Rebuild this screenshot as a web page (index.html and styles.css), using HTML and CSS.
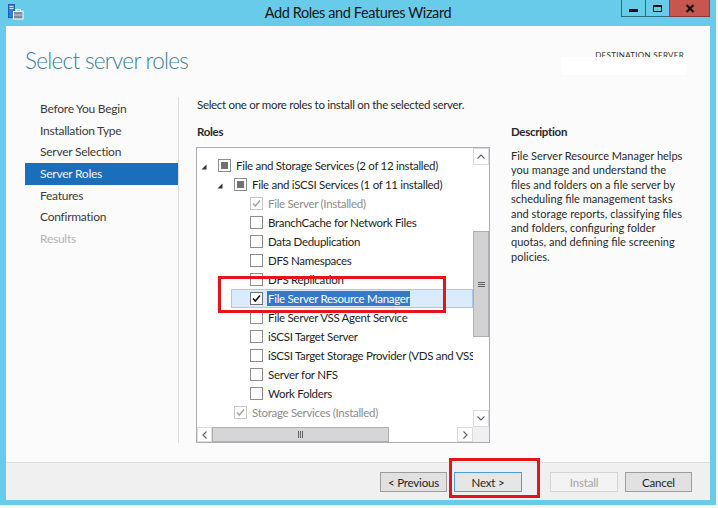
FILE: index.html
```html
<!DOCTYPE html>
<html lang="en">
<head>
    <meta charset="UTF-8">
    <title>Add Roles and Features Wizard</title>
    <link rel="stylesheet" href="styles.css">
</head>
<body>
    <div class="window">
        <!-- Title bar -->
        <div class="titlebar">
            <div class="tb-left">
                <svg class="app-icon" width="16" height="16" viewBox="0 0 16 16">
                    <rect x="0.5" y="0.5" width="6" height="13" fill="#2f7fd6" stroke="#1d5fae"/>
                    <rect x="1.5" y="2" width="4" height="1" fill="#cfe6ff"/>
                    <rect x="1.5" y="4" width="4" height="1" fill="#cfe6ff"/>
                    <rect x="5" y="7" width="10.5" height="8.5" fill="#fff"/>
                    <rect x="8" y="5.5" width="4.5" height="3" fill="none" stroke="#fff" stroke-width="1.2"/>
                    <rect x="6" y="8" width="8.5" height="6.5" fill="#7d8c9b"/>
                    <rect x="6" y="10.5" width="8.5" height="1" fill="#c3ccd5"/>
                </svg>
            </div>
            <div class="title">Add Roles and Features Wizard</div>
            <div class="caption-buttons">
                <div class="cap-btn cap-min"><span class="glyph-min"></span></div>
                <div class="cap-btn cap-max"><span class="glyph-max"></span></div>
                <div class="cap-btn cap-close">
                    <svg width="10" height="9" viewBox="0 0 10 9">
                        <path d="M1.5 1 L8.5 8 M8.5 1 L1.5 8" stroke="#111" stroke-width="2.2"/>
                    </svg>
                </div>
            </div>
        </div>

        <div class="client">
            <div class="header">
                <h1>Select server roles</h1>
                <div class="dest">
                    <div class="dest-label">DESTINATION SERVER</div>
                    <div class="dest-name"></div>
                </div>
            </div>

            <div class="main">
                <ul class="steps">
                    <li>Before You Begin</li>
                    <li>Installation Type</li>
                    <li>Server Selection</li>
                    <li class="current">Server Roles</li>
                    <li>Features</li>
                    <li>Confirmation</li>
                    <li class="disabled">Results</li>
                </ul>

                <div class="content">
                    <p class="intro">Select one or more roles to install on the selected server.</p>
                    <div class="columns">
                        <div class="roles">
                            <h2>Roles</h2>
                            <div class="listbox">
                                <div class="list-view">
                                    <div class="rows">
                                        <div class="row lvl0">
                                            <div class="item">
                                                <span class="exp"><svg width="6" height="6" viewBox="0 0 6 6"><path d="M5.5 0.5 V5.5 H0.5 Z" fill="#333"/></svg></span>
                                                <span class="cb partial"></span>
                                                <span class="label">File and Storage Services (2 of 12 installed)</span>
                                            </div>
                                        </div>
                                        <div class="row lvl1">
                                            <div class="item">
                                                <span class="exp"><svg width="6" height="6" viewBox="0 0 6 6"><path d="M5.5 0.5 V5.5 H0.5 Z" fill="#333"/></svg></span>
                                                <span class="cb partial"></span>
                                                <span class="label">File and iSCSI Services (1 of 11 installed)</span>
                                            </div>
                                        </div>
                                        <div class="row lvl2">
                                            <div class="item">
                                                <span class="exp"></span>
                                                <span class="cb checked disabled"><svg width="11" height="11" viewBox="0 0 11 11"><path d="M2 5.5 L4.3 8 L9 2.5" fill="none" stroke="#a6a6a6" stroke-width="1.5"/></svg></span>
                                                <span class="label muted">File Server (Installed)</span>
                                            </div>
                                        </div>
                                        <div class="row lvl2">
                                            <div class="item">
                                                <span class="exp"></span>
                                                <span class="cb"></span>
                                                <span class="label">BranchCache for Network Files</span>
                                            </div>
                                        </div>
                                        <div class="row lvl2">
                                            <div class="item">
                                                <span class="exp"></span>
                                                <span class="cb"></span>
                                                <span class="label">Data Deduplication</span>
                                            </div>
                                        </div>
                                        <div class="row lvl2">
                                            <div class="item">
                                                <span class="exp"></span>
                                                <span class="cb"></span>
                                                <span class="label">DFS Namespaces</span>
                                            </div>
                                        </div>
                                        <div class="row lvl2">
                                            <div class="item">
                                                <span class="exp"></span>
                                                <span class="cb"></span>
                                                <span class="label">DFS Replication</span>
                                            </div>
                                        </div>
                                        <div class="row lvl2">
                                            <div class="item selected">
                                                <span class="exp"></span>
                                                <span class="cb checked"><svg width="11" height="11" viewBox="0 0 11 11"><path d="M2 5.5 L4.3 8 L9 2.5" fill="none" stroke="#111" stroke-width="1.6"/></svg></span>
                                                <span class="label sel-text">File Server Resource Manager</span>
                                                <div class="callout callout-row"></div>
                                            </div>
                                        </div>
                                        <div class="row lvl2">
                                            <div class="item">
                                                <span class="exp"></span>
                                                <span class="cb"></span>
                                                <span class="label">File Server VSS Agent Service</span>
                                            </div>
                                        </div>
                                        <div class="row lvl2">
                                            <div class="item">
                                                <span class="exp"></span>
                                                <span class="cb"></span>
                                                <span class="label">iSCSI Target Server</span>
                                            </div>
                                        </div>
                                        <div class="row lvl2">
                                            <div class="item">
                                                <span class="exp"></span>
                                                <span class="cb"></span>
                                                <span class="label">iSCSI Target Storage Provider (VDS and VSS hardware providers)</span>
                                            </div>
                                        </div>
                                        <div class="row lvl2">
                                            <div class="item">
                                                <span class="exp"></span>
                                                <span class="cb"></span>
                                                <span class="label">Server for NFS</span>
                                            </div>
                                        </div>
                                        <div class="row lvl2">
                                            <div class="item">
                                                <span class="exp"></span>
                                                <span class="cb"></span>
                                                <span class="label">Work Folders</span>
                                            </div>
                                        </div>
                                        <div class="row lvl1">
                                            <div class="item">
                                                <span class="exp"></span>
                                                <span class="cb checked disabled"><svg width="11" height="11" viewBox="0 0 11 11"><path d="M2 5.5 L4.3 8 L9 2.5" fill="none" stroke="#a6a6a6" stroke-width="1.5"/></svg></span>
                                                <span class="label muted">Storage Services (Installed)</span>
                                            </div>
                                        </div>
                                    </div>

                                    <div class="vscroll">
                                        <div class="sb-btn">
                                            <svg width="8" height="5" viewBox="0 0 8 5"><path d="M0.5 4.5 L4 1 L7.5 4.5" fill="none" stroke="#606060" stroke-width="1.1"/></svg>
                                        </div>
                                        <div class="v-track">
                                            <div class="v-thumb">
                                                <svg width="7" height="5" viewBox="0 0 7 5"><path d="M0 0.5 H7 M0 2.5 H7 M0 4.5 H7" stroke="#606060" stroke-width="1"/></svg>
                                            </div>
                                        </div>
                                        <div class="sb-btn">
                                            <svg width="8" height="5" viewBox="0 0 8 5"><path d="M0.5 0.5 L4 4 L7.5 0.5" fill="none" stroke="#606060" stroke-width="1.1"/></svg>
                                        </div>
                                    </div>
                                </div>

                                <div class="hscroll-row">
                                    <div class="hscroll">
                                        <div class="sb-btn h-btn">
                                            <svg width="5" height="8" viewBox="0 0 5 8"><path d="M4.5 0.5 L1 4 L4.5 7.5" fill="none" stroke="#606060" stroke-width="1.1"/></svg>
                                        </div>
                                        <div class="h-thumb">
                                            <svg width="5" height="7" viewBox="0 0 5 7"><path d="M0.5 0 V7 M2.5 0 V7 M4.5 0 V7" stroke="#606060" stroke-width="1"/></svg>
                                        </div>
                                        <div class="h-track"></div>
                                        <div class="sb-btn h-btn">
                                            <svg width="5" height="8" viewBox="0 0 5 8"><path d="M0.5 0.5 L4 4 L0.5 7.5" fill="none" stroke="#606060" stroke-width="1.1"/></svg>
                                        </div>
                                    </div>
                                    <div class="corner"></div>
                                </div>
                            </div>
                        </div>

                        <div class="description">
                            <h2>Description</h2>
                            <p>File Server Resource Manager helps you manage and understand the files and folders on a file server by scheduling file management tasks and storage reports, classifying files and folders, configuring folder quotas, and defining file screening policies.</p>
                        </div>
                    </div>
                </div>
            </div>

            <div class="footer">
                <button class="btn">&lt; Previous</button>
                <button class="btn btn-default">Next &gt;<span class="callout callout-next"></span></button>
                <button class="btn btn-install" disabled>Install</button>
                <button class="btn">Cancel</button>
            </div>
        </div>
    </div>
</body>
</html>
```

FILE: styles.css
```css
* {
    box-sizing: border-box;
}

body {
    margin: 0;
    background: #f6f6f6;
    font-family: Lato, "Noto Sans", sans-serif;
    font-size: 11.5px;
    letter-spacing: -0.3px;
    color: #1e1e1e;
}

.window {
    width: 716px;
    height: 505px;
    background: #69cbea;
    padding: 0 6px 5px;
    display: flex;
    flex-direction: column;
}

/* title bar */
.titlebar {
    height: 26px;
    flex-shrink: 0;
    display: grid;
    grid-template-columns: 1fr auto 1fr;
}

.tb-left {
    padding: 4px 0 0 2px;
}

.title {
    line-height: 26px;
    font-size: 14.5px;
    letter-spacing: -0.4px;
    color: #151515;
}

.caption-buttons {
    justify-self: end;
    display: flex;
    height: 17px;
}

.cap-btn {
    height: 17px;
    border: 1px solid #2c6a80;
    border-top: none;
    display: flex;
    align-items: center;
    justify-content: center;
}

.cap-min {
    width: 25px;
}

.cap-max {
    width: 24px;
    border-left: none;
}

.cap-close {
    width: 40px;
    border-left: none;
    background: #c7564f;
    border-color: #8a3a35;
}

.glyph-min {
    width: 9px;
    height: 3px;
    margin-top: 4px;
    background: #111;
}

.glyph-max {
    width: 9px;
    height: 7px;
    border: 2px solid #111;
    border-width: 2px 1.5px 1.5px;
}

/* client area */
.client {
    flex: 1;
    background: #fbfbfb;
    display: flex;
    flex-direction: column;
}

.header {
    height: 71px;
    flex-shrink: 0;
    display: flex;
    justify-content: space-between;
}

.header h1 {
    margin: 0;
    padding: 21px 0 0 19px;
    font-size: 22.5px;
    letter-spacing: -0.7px;
    line-height: 28px;
    font-weight: 300;
    color: #3a7d98;
}

.dest {
    margin: 24px 23px 0 0;
    width: 126px;
    text-align: right;
}

.dest-label {
    font-size: 8px;
    line-height: 10px;
    letter-spacing: 0.3px;
    padding-right: 3px;
    color: #333;
}

.dest-name {
    position: relative;
    height: 18px;
    margin-top: -3px;
    background: #fff;
}

.main {
    flex: 1;
    display: flex;
    align-items: flex-start;
}

.steps {
    list-style: none;
    margin: 0 0 0 19px;
    padding: 1px 0 0;
    width: 154px;
    height: 346px;
    border-right: 1px solid #dcdcdc;
    flex-shrink: 0;
}

.steps li {
    height: 21.67px;
    line-height: 21.67px;
    padding-left: 15px;
    font-size: 12px;
    letter-spacing: -0.25px;
    color: #3a3a3a;
}

.steps li.current {
    background: #1a6eba;
    color: #f2f2f2;
}

.steps li.disabled {
    color: #b4b4b4;
}

.content {
    flex: 1;
    padding-left: 18px;
}

.intro {
    margin: 0;
    line-height: 15px;
    color: #2a2a2a;
}

.columns {
    display: flex;
}

h2 {
    margin: 12px 0 7px;
    font-size: 11.5px;
    line-height: 16px;
    font-weight: 700;
    color: #2a2a2a;
}

.roles {
    width: 294px;
    margin-left: -1px;
    flex-shrink: 0;
}

.roles h2 {
    padding-left: 1px;
}

/* list box */
.listbox {
    height: 296px;
    border: 1px solid #abadb3;
    background: #fff;
    display: flex;
    flex-direction: column;
}

.list-view {
    flex: 1;
    display: flex;
    min-height: 0;
}

.rows {
    flex: 1;
    overflow: hidden;
    padding-top: 8px;
    white-space: nowrap;
}

.row {
    height: 19px;
    display: flex;
}

.lvl0 { padding-left: 2px; }
.lvl1 { padding-left: 18px; }
.lvl2 { padding-left: 34px; }

.item {
    flex: 1;
    height: 19px;
    display: flex;
    align-items: center;
}

.item.selected {
    position: relative;
    background: #dcebfc;
    box-shadow: inset 0 0 0 1px #a7c9ef;
}

.exp {
    width: 16px;
    flex-shrink: 0;
    padding: 3px 0 0 2px;
    display: flex;
}

.cb {
    width: 13px;
    height: 13px;
    margin-left: 3px;
    flex-shrink: 0;
    border: 1px solid #8e8e8e;
    background: #fff;
    display: flex;
    align-items: center;
    justify-content: center;
}

.cb.partial::after {
    content: "";
    width: 7px;
    height: 7px;
    background: #717171;
}

.cb.checked {
    border-color: #707070;
}

.cb.disabled {
    border-color: #c6c6c6;
}

.label {
    margin-left: 5px;
    line-height: 15px;
}

.label.muted {
    color: #8c8c8c;
}

.label.sel-text {
    margin-left: 4px;
    padding: 0 1px;
    background: #3579c9;
    color: #fff;
}

/* scroll bars */
.vscroll {
    width: 16px;
    flex-shrink: 0;
    display: flex;
    flex-direction: column;
    background: #fff;
}

.sb-btn {
    height: 17px;
    border: 1px solid #dcdcdc;
    background: #fff;
    display: flex;
    align-items: center;
    justify-content: center;
    flex-shrink: 0;
}

.v-track {
    flex: 1;
}

.v-thumb {
    margin-top: 66px;
    height: 106px;
    background: #d2d2d2;
    border: 1px solid #b0b0b0;
    display: flex;
    align-items: center;
    justify-content: center;
}

.hscroll-row {
    height: 15px;
    display: flex;
    flex-shrink: 0;
}

.hscroll {
    flex: 1;
    display: flex;
}

.h-btn {
    height: 15px;
    width: 16px;
}

.h-btn:first-child {
    width: 15px;
}

.h-thumb {
    width: 177px;
    background: #d6d6d6;
    border: 1px solid #b0b0b0;
    display: flex;
    align-items: center;
    justify-content: center;
}

.h-track {
    flex: 1;
}

.corner {
    width: 16px;
    background: #f0f0f0;
}

/* description */
.description {
    margin-left: 21px;
    width: 174px;
}

.description p {
    margin: 9px 0 0;
    font-size: 11px;
    letter-spacing: 0;
    line-height: 14.4px;
    color: #2a2a2a;
}

/* footer */
.footer {
    height: 38px;
    flex-shrink: 0;
    border-top: 1px solid #dfdfdf;
    background: #f0f0f0;
    display: flex;
    justify-content: flex-end;
    padding: 9px 18px 0 0;
}

.btn {
    width: 67px;
    height: 20px;
    margin-left: 7px;
    padding: 0;
    font-family: inherit;
    font-size: 11.5px;
    letter-spacing: -0.2px;
    color: #1e1e1e;
    background: #e1e1e1;
    border: 1px solid #9d9d9d;
}

.btn-default {
    width: 68px;
    position: relative;
    border-color: #4d9de3;
    background: #e4e6e8;
}

.btn-install {
    width: 68px;
    margin-left: 28px;
    color: #a3a3a3;
    background: #f3f3f3;
    border-color: #d5d5d5;
}

/* red annotation boxes */
.callout {
    position: absolute;
    border: 3px solid #e4141d;
    z-index: 5;
}

.callout-row {
    left: -13px;
    top: -13px;
    width: 228px;
    height: 37px;
}

.callout-next {
    left: -6px;
    top: -15px;
    width: 91px;
    height: 40px;
}
```
